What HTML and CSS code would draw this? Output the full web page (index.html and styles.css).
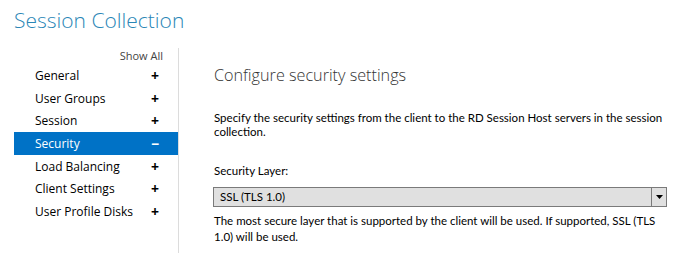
FILE: index.html
```html
<!DOCTYPE html>
<html lang="en">
    <head>
        <meta charset="utf-8">
        <link rel="stylesheet" href="styles.css">
    </head>
    <body>
        <header class="page-title">Session Collection</header>
        <main class="layout">
            <nav class="side">
                <div class="show-all">Show All</div>
                <ul class="side-list">
                    <li class="side-item"><span>General</span><span class="sign">+</span></li>
                    <li class="side-item"><span>User Groups</span><span class="sign">+</span></li>
                    <li class="side-item"><span>Session</span><span class="sign">+</span></li>
                    <li class="side-item active"><span>Security</span><span class="sign">&minus;</span></li>
                    <li class="side-item"><span>Load Balancing</span><span class="sign">+</span></li>
                    <li class="side-item"><span>Client Settings</span><span class="sign">+</span></li>
                    <li class="side-item"><span>User Profile Disks</span><span class="sign">+</span></li>
                </ul>
            </nav>
            <section class="content">
                <h2 class="content-title">Configure security settings</h2>
                <p class="desc">Specify the security settings from the client to the RD Session Host servers in the session collection.</p>
                <div class="field-label">Security Layer:</div>
                <div class="select">
                    <span class="select-value">SSL (TLS 1.0)</span>
                    <span class="select-btn">
                        <svg width="7" height="4" viewBox="0 0 7 4"><path d="M0 0h7L3.5 4z" fill="#000"/></svg>
                    </span>
                </div>
                <p class="help">The most secure layer that is supported by the client will be used. If supported, SSL (TLS 1.0) will be used.</p>
            </section>
        </main>
    </body>
</html>
```

FILE: styles.css
```css
body{
    margin: 0;
    background: #fff;
    font-family: "Open Sans", "Noto Sans", sans-serif;
    font-size: 12px;
    color: #000;
}
ul{
    margin: 0;
    padding: 0;
}
li{
    list-style: none;
}
.page-title{
    padding: 6px 0 0 14px;
    height: 48px;
    box-sizing: border-box;
    font-size: 21px;
    font-weight: 300;
    color: #2a86b6;
}
.layout{
    display: flex;
}
.side{
    width: 164px;
    margin-left: 14px;
    border-right: 1px solid #dcdcdc;
    min-height: 205px;
}
.show-all{
    text-align: right;
    padding-right: 15px;
    font-size: 11px;
    color: #444;
    height: 16px;
    line-height: 16px;
}
.side-item{
    display: flex;
    justify-content: space-between;
    align-items: center;
    height: 22.7px;
    padding: 0 19px 0 21px;
}
.side-item .sign{
    font-weight: 700;
    font-size: 14px;
}
.side-item.active{
    background: #0072c6;
    color: #fff;
}
.content{
    flex: 1;
    padding: 15px 0 0 35px;
    font-family: Lato, "Open Sans", sans-serif;
    font-size: 11.5px;
}
.content-title{
    margin: 0;
    font-family: "Open Sans", sans-serif;
    font-size: 16.2px;
    font-weight: 300;
    color: #333;
    line-height: 24px;
}
.desc{
    margin: 24px 0 0;
    width: 450px;
    line-height: 14px;
}
.field-label{
    margin-top: 24px;
    line-height: 16px;
}
.select{
    display: flex;
    margin-top: 8px;
    width: 452px;
    height: 18px;
    margin-left: -1px;
    border: 1px solid #7a7a7a;
    background: #e0e0e0;
}
.select-value{
    flex: 1;
    padding-left: 6px;
    line-height: 18px;
}
.select-btn{
    width: 14px;
    border-left: 1px solid #7a7a7a;
    display: flex;
    align-items: center;
    justify-content: center;
}
.help{
    margin: 6px 0 0;
    width: 460px;
    line-height: 16px;
}
```
